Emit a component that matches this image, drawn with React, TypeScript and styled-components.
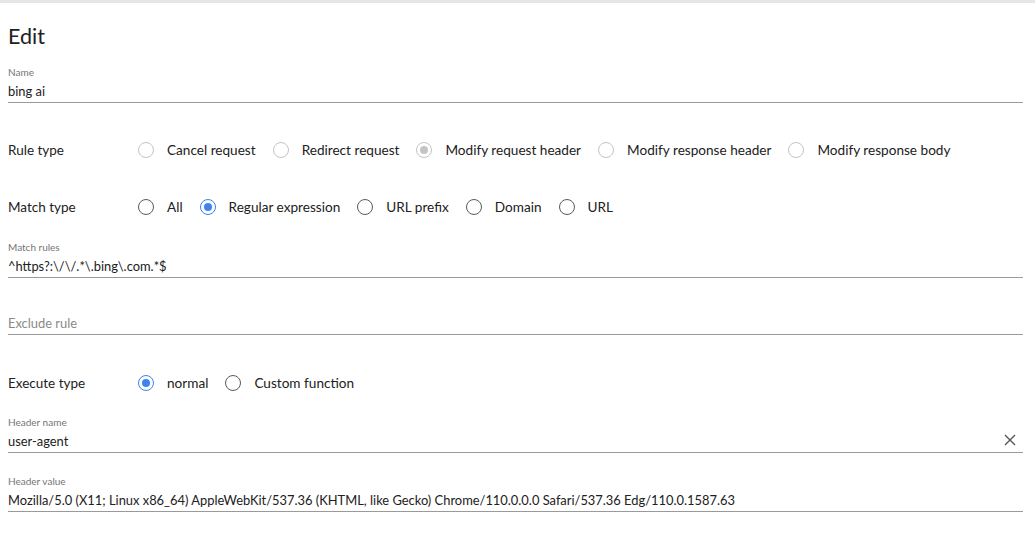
import React from "react";
import styled, { createGlobalStyle } from "styled-components";

const Global = createGlobalStyle`
  html, body { margin: 0; padding: 0; background: #fff; }
  body { font-family: "Lato", "Noto Sans", sans-serif; color: #212121; }
  * { box-sizing: border-box; }
`;

const Page = styled.div`
  border-top: 3px solid #e6e6e6;
  padding: 0 12px 0 8px;
  display: flex;
  flex-direction: column;
`;

const Title = styled.h1`
  margin: 19px 0 0 0;
  height: 28px;
  line-height: 28px;
  font-size: 21.5px;
  font-weight: 400;
  color: #212121;
`;

const Field = styled.div<{ $mt: number }>`
  margin-top: ${(p) => p.$mt}px;
  display: flex;
  flex-direction: column;
  border-bottom: 1px solid #9a9a9a;
  position: relative;
`;

const FieldLabel = styled.label`
  height: 14px;
  line-height: 12px;
  font-size: 10px;
  color: #757575;
`;

const FieldInput = styled.div<{ $placeholder?: boolean }>`
  height: 22px;
  line-height: 22px;
  font-size: 12.9px;
  color: ${(p) => (p.$placeholder ? "#8a8a8a" : "#212121")};
  white-space: nowrap;
`;

const ClearButton = styled.span`
  position: absolute;
  right: 6px;
  bottom: 5px;
  width: 14px;
  height: 14px;
  display: flex;
  align-items: center;
  justify-content: center;
`;

const RadioRow = styled.div<{ $mt: number }>`
  margin-top: ${(p) => p.$mt}px;
  height: 40px;
  display: flex;
  align-items: center;
`;

const RowLabel = styled.div`
  width: 130px;
  font-size: 13.5px;
  color: #212121;
`;

const RadioGroup = styled.div`
  display: flex;
  align-items: center;
  gap: 17px;
`;

const RadioItem = styled.label`
  display: flex;
  align-items: center;
  gap: 13px;
  font-size: 13.6px;
  color: #212121;
`;

const Circle = styled.span<{ $checked?: boolean; $disabled?: boolean }>`
  width: 16px;
  height: 16px;
  border-radius: 50%;
  border: 1.5px solid
    ${(p) => (p.$disabled ? "#c4c4c4" : p.$checked ? "#3d82f6" : "#5a5a5a")};
  display: flex;
  align-items: center;
  justify-content: center;
  &::after {
    content: "";
    display: ${(p) => (p.$checked ? "block" : "none")};
    width: 8px;
    height: 8px;
    border-radius: 50%;
    background: ${(p) => (p.$disabled ? "#c4c4c4" : "#3d82f6")};
  }
`;

type Opt = { label: string; checked?: boolean };

const Radios = ({ opts, disabled }: { opts: Opt[]; disabled?: boolean }) => (
  <RadioGroup>
    {opts.map((o) => (
      <RadioItem key={o.label}>
        <Circle $checked={o.checked} $disabled={disabled} />
        {o.label}
      </RadioItem>
    ))}
  </RadioGroup>
);

export default function App() {
  return (
    <>
      <Global />
      <Page>
        <Title>Edit</Title>
        <Field $mt={16}>
          <FieldLabel>Name</FieldLabel>
          <FieldInput>bing ai</FieldInput>
        </Field>
        <RadioRow $mt={27}>
          <RowLabel>Rule type</RowLabel>
          <Radios
            disabled
            opts={[
              { label: "Cancel request" },
              { label: "Redirect request" },
              { label: "Modify request header", checked: true },
              { label: "Modify response header" },
              { label: "Modify response body" },
            ]}
          />
        </RadioRow>
        <RadioRow $mt={17}>
          <RowLabel>Match type</RowLabel>
          <Radios
            opts={[
              { label: "All" },
              { label: "Regular expression", checked: true },
              { label: "URL prefix" },
              { label: "Domain" },
              { label: "URL" },
            ]}
          />
        </RadioRow>
        <Field $mt={14}>
          <FieldLabel>Match rules</FieldLabel>
          <FieldInput>^https?:\/\/.*\.bing\.com.*$</FieldInput>
        </Field>
        <Field $mt={20}>
          <FieldLabel />
          <FieldInput $placeholder>Exclude rule</FieldInput>
        </Field>
        <RadioRow $mt={28}>
          <RowLabel>Execute type</RowLabel>
          <Radios opts={[{ label: "normal", checked: true }, { label: "Custom function" }]} />
        </RadioRow>
        <Field $mt={13}>
          <FieldLabel>Header name</FieldLabel>
          <FieldInput>user-agent</FieldInput>
          <ClearButton>
            <svg width="12" height="12" viewBox="0 0 12 12">
              <path d="M1 1L11 11M11 1L1 11" stroke="#555" strokeWidth="1.4" />
            </svg>
          </ClearButton>
        </Field>
        <Field $mt={22}>
          <FieldLabel>Header value</FieldLabel>
          <FieldInput>
            Mozilla/5.0 (X11; Linux x86_64) AppleWebKit/537.36 (KHTML, like Gecko) Chrome/110.0.0.0 Safari/537.36 Edg/110.0.1587.63
          </FieldInput>
        </Field>
      </Page>
    </>
  );
}
